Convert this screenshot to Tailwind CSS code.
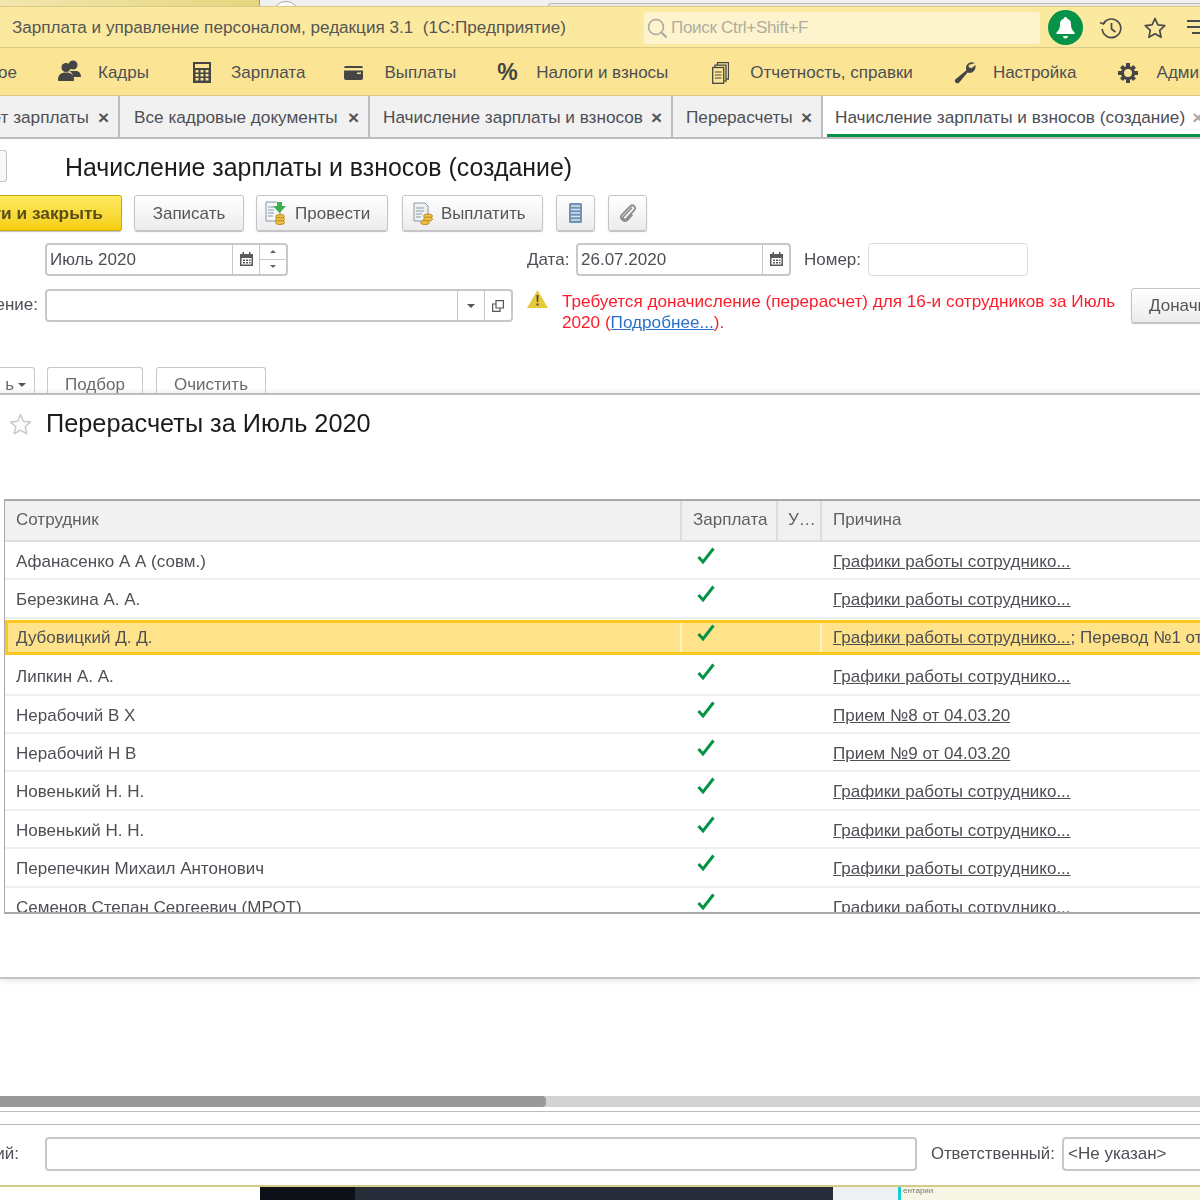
<!DOCTYPE html>
<html lang="ru">
<head>
<meta charset="UTF-8">
<title>Начисление зарплаты и взносов (создание)</title>
<script src="https://cdn.jsdelivr.net/npm/@tailwindcss/browser@4"></script>
</head>
<body class="w-[1200px] h-[1200px] overflow-hidden bg-white font-['Liberation_Sans',Arial,sans-serif] text-[17px] text-[#4d4f55] blur-[0.35px]">

<!-- strip of the window behind -->
<div class="flex h-[6px] overflow-hidden">
  <div class="w-[260px] shrink-0 bg-linear-to-r from-[#f1e6ad] to-[#e6d67f] border-r border-[#999]"></div>
  <div class="flex-1 flex items-start bg-[#f0f0f0]">
    <div class="ml-[12px] mt-[1px] w-[28px] h-[28px] shrink-0 rounded-full border border-[#aaa] bg-white"></div>
    <div class="ml-[248px] mt-[3px] flex-1 h-[10px] rounded-tl-[3px] border-t border-l border-[#bbb] bg-[#e8e8e8]"></div>
  </div>
</div>

<!-- title bar -->
<div class="flex items-center h-[42px] pt-[1px] bg-[#fbe99f] border-y border-[#d9cb85] overflow-hidden">
  <div class="ml-3 w-[632px] shrink-0 whitespace-pre text-[17.100px] text-[#555]">Зарплата и управление персоналом, редакция 3.1  (1С:Предприятие)</div>
  <div class="flex items-center w-[396px] h-[32px] shrink-0 bg-[#fdf4cd] rounded-[3px]">
    <svg class="ml-[1px] w-[24px] h-[24px]" viewBox="0 0 24 24" fill="none" stroke="#a9a9a0" stroke-width="1.6"><circle cx="11" cy="11" r="7.5"/><path d="M16.5 16.5l5 5" stroke-width="2"/></svg>
    <span class="ml-[2px] text-[#b0ada0] tracking-[-0.3px]">Поиск Ctrl+Shift+F</span>
  </div>
  <div class="ml-2 flex items-center justify-center w-[35px] h-[35px] shrink-0 rounded-full bg-[#069347]">
    <svg class="w-[21px] h-[24px]" viewBox="0 0 21 24" fill="#fff"><path d="M10.500 1c1.200 0 1.800.8 1.800 1.800 3 .8 3.700 3.300 3.700 6.200 0 3.400 1.500 5.500 3.500 7.500v1.500H1.500V16.500c2-2 3.500-4.100 3.500-7.500 0-2.900.7-5.400 3.700-6.200C8.700 1.800 9.300 1 10.500 1z"/><path d="M8 20h5c0 1.500-1 2.500-2.500 2.500S8 21.500 8 20z"/></svg>
  </div>
  <svg class="ml-[16px] w-[24px] h-[24px] shrink-0" viewBox="0 0 24 24" fill="none" stroke="#4a4a4a" stroke-width="1.7"><path d="M4.500 7.500A9.300 9.300 0 1 1 3.200 13"/><path d="M1 6.500l3.500 1.500 2.500-3.500" stroke-width="1.500"/><path d="M12.500 7v6l4 3"/></svg>
  <svg class="ml-[20px] w-[24px] h-[24px] shrink-0" viewBox="0 0 24 24" fill="none" stroke="#4a4a4a" stroke-width="1.700" stroke-linejoin="round"><path d="M12 2.500l2.900 6.400 6.900.8-5.100 4.700 1.400 6.900-6.100-3.500-6.100 3.500 1.400-6.900L2.200 9.700l6.900-.8z"/></svg>
  <svg class="ml-[20px] w-[24px] h-[24px] shrink-0" viewBox="0 0 24 24" fill="none" stroke="#4a4a4a" stroke-width="1.800"><path d="M0 5h24M0 11h24M5 17h19"/></svg>
</div>

<!-- main menu -->
<div class="flex items-center h-[48px] pt-[2px] bg-[#fbe594] border-b border-[#d9cb85] whitespace-nowrap overflow-hidden">
  <span class="ml-[-2px] w-[60px] shrink-0">ое</span>
  <svg class="w-[23px] h-[21px] shrink-0 mt-[-4px]" viewBox="0 0 23 21" fill="#454545"><circle cx="15" cy="5" r="4.500"/><path d="M11 11h8c2.500.5 4 2.500 4 6h-8c0-3-1.500-5-4-6z"/><circle cx="8" cy="7.500" r="4.500"/><path d="M0 20c0-5 2.500-7.500 8-7.500s8 2.500 8 7.500c0 .7-.3 1-1 1H1c-.7 0-1-.3-1-1z"/></svg>
  <span class="ml-[17px] mr-[44px] shrink-0">Кадры</span>
  <svg class="w-[18px] h-[21px] shrink-0" viewBox="0 0 18 21" fill="#454545"><path fill-rule="evenodd" d="M0 0h18v21H0zM2 2v4h14V2zM2.500 8v2.500h3V8zM7.500 8v2.500h3V8zM12.500 8v2.500h3V8zM2.500 12v2.500h3V12zM7.500 12v2.500h3V12zM12.500 12v2.500h3V12zM2.500 16v2.500h3V16zM7.500 16v2.500h3V16zM12.500 16v2.500h3V16z"/></svg>
  <span class="ml-[20px] mr-[39px] shrink-0">Зарплата</span>
  <svg class="w-[19px] h-[14px] shrink-0" viewBox="0 0 19 14" fill="#454545"><path d="M0 2a2 2 0 0 1 2-2h15a2 2 0 0 1 2 2H0zM0 4.500h19V12a2 2 0 0 1-2 2H2a2 2 0 0 1-2-2z"/><rect x="13" y="6.500" width="4" height="1.500" fill="#fbe594"/></svg>
  <span class="ml-[21px] mr-[41px] shrink-0">Выплаты</span>
  <span class="w-[20px] text-[23px] font-bold text-[#454545] shrink-0 leading-none">%</span>
  <span class="ml-[19px] mr-[44px] shrink-0">Налоги и взносы</span>
  <svg class="w-[17px] h-[22px] shrink-0" viewBox="0 0 17 22" fill="none" stroke="#454545" stroke-width="1.300"><path d="M5.500 3V.7h11V17h-2"/><path d="M3 5.500V3.200h11V19h-1.500"/><rect x=".7" y="5.500" width="11" height="15.800"/><path d="M3 10h6.500M3 13h6.500M3 16h6.500" stroke-width="1.100"/></svg>
  <span class="ml-[21px] mr-[41px] shrink-0">Отчетность, справки</span>
  <svg class="w-[22px] h-[22px] shrink-0" viewBox="0 0 22 22" fill="#454545"><path d="M21 1c-2.800-1.200-6-.7-7.700 1.500-1.500 1.800-1.600 3.900-.9 5.700L1.500 17.300c-1.300 1.200-.4 3 .7 3.700.9.600 2.300.5 3-.5l8.400-10c2 .8 4.200.4 6-1.300C21.300 7.400 22 4.700 21.300 3l-3.800 3.300-2.600-1.100-.4-2.300z"/></svg>
  <span class="ml-[17px] mr-[41px] shrink-0">Настройка</span>
  <svg class="w-[20px] h-[20px] shrink-0" viewBox="0 0 20 20"><circle cx="10" cy="10" r="5.500" fill="none" stroke="#454545" stroke-width="3"/><path d="M8 0h4v4H8zM8 16h4v4H8zM0 8h4v4H0zM16 8h4v4h-4zM2 4.800L4.800 2l2.500 2.500-2.800 2.800zM12.700 15.500l2.800-2.800 2.500 2.500-2.800 2.800zM15.200 2L18 4.800l-2.500 2.500-2.800-2.800zM4.500 12.700l2.800 2.800L4.800 18 2 15.200z" fill="#454545"/></svg>
  <span class="ml-[19px] shrink-0">Администрирование</span>
</div>

<!-- open tabs -->
<div class="flex h-[43px] bg-[#f1f1f1] border-b-2 border-[#bdbdbd] text-[17.200px] whitespace-nowrap overflow-hidden">
  <div class="flex items-center justify-end w-[120px] shrink-0 pt-[2px] pr-[9px] border-r-2 border-[#bdbdbd] overflow-hidden">
    <span class="shrink-0">ет зарплаты</span><span class="ml-[9px] text-[19px] leading-none font-bold text-[#555] shrink-0">×</span>
  </div>
  <div class="flex items-center justify-between w-[250px] shrink-0 pt-[2px] pl-[14px] pr-[9px] border-r-2 border-[#bdbdbd]">
    <span>Все кадровые документы</span><span class="text-[19px] leading-none font-bold text-[#555]">×</span>
  </div>
  <div class="flex items-center justify-between w-[303px] shrink-0 pt-[2px] pl-[13px] pr-[9px] border-r-2 border-[#bdbdbd]">
    <span>Начисление зарплаты и взносов</span><span class="text-[19px] leading-none font-bold text-[#555]">×</span>
  </div>
  <div class="flex items-center justify-between w-[150px] shrink-0 pt-[2px] pl-[13px] pr-[9px] border-r-2 border-[#bdbdbd]">
    <span>Перерасчеты</span><span class="text-[19px] leading-none font-bold text-[#555]">×</span>
  </div>
  <div class="flex-1 bg-white pl-[4px]">
    <div class="flex items-center h-full pt-[5px] border-b-[3px] border-[#069347] pl-[8px] overflow-hidden">
      <span class="shrink-0">Начисление зарплаты и взносов (создание)</span><span class="ml-[7px] text-[19px] leading-none font-bold text-[#aaa] shrink-0">×</span>
    </div>
  </div>
</div>

<!-- document form -->
<div class="h-[256px] border-b-2 border-[#bdbdbd] shadow-[inset_0_-6px_6px_-6px_rgba(0,0,0,0.12)] overflow-hidden">
  <div class="flex items-center h-[56px] pt-[1px]">
    <div class="w-[7px] h-[32px] mt-[-3px] bg-[#f7f7f7] border border-l-0 border-[#c4c4c4] rounded-r-[3px] shrink-0"></div>
    <div class="ml-[58px] text-[24.900px] text-[#1c1c1c] whitespace-nowrap">Начисление зарплаты и взносов (создание)</div>
  </div>

  <div class="flex h-[36px] whitespace-nowrap">
    <div class="flex items-center justify-end w-[122px] shrink-0 pt-[1px] rounded-r-[3px] bg-linear-to-b from-[#fdea5c] to-[#f5ce00] border border-l-0 border-[#c9a912] shadow-[0_1px_1px_rgba(0,0,0,0.25)] pr-[18px] font-bold text-[17.300px] text-[#5a4d1a] overflow-hidden">
      <span class="shrink-0">ти и закрыть</span>
    </div>
    <button class="ml-[12px] w-[110px] pt-[1px] bg-linear-to-b from-white to-[#ececec] border border-[#c4c4c4] rounded-[3px] shadow-[0_1px_1px_rgba(0,0,0,0.25)] text-[#555]">Записать</button>
    <button class="ml-[12px] w-[132px] flex items-center pl-[8px] gap-[9px] bg-linear-to-b from-white to-[#ececec] border border-[#c4c4c4] rounded-[3px] shadow-[0_1px_1px_rgba(0,0,0,0.25)] text-[#555]">
      <svg class="w-[21px] h-[24px]" viewBox="0 0 21 24"><path d="M1 1h11l3 3v16H1z" fill="#f4f6f8" stroke="#8a97a3"/><path d="M3 6h6M3 9h6M3 12h6M3 15h5" stroke="#8a97a3"/><path d="M12 1h5v4h4l-6.500 7L8 5h4z" fill="#3cb04e"/><ellipse cx="15" cy="15.500" rx="4.500" ry="2" fill="#f2c14a" stroke="#bb8a1c"/><ellipse cx="15" cy="18.500" rx="4.500" ry="2" fill="#f2c14a" stroke="#bb8a1c"/><ellipse cx="15" cy="21.500" rx="4.500" ry="2" fill="#f2c14a" stroke="#bb8a1c"/></svg>
      <span class="pt-[1px]">Провести</span>
    </button>
    <button class="ml-[14px] w-[141px] flex items-center pl-[10px] gap-[7px] bg-linear-to-b from-white to-[#ececec] border border-[#c4c4c4] rounded-[3px] shadow-[0_1px_1px_rgba(0,0,0,0.25)] text-[16.800px] text-[#555]">
      <svg class="w-[21px] h-[24px]" viewBox="0 0 21 24"><path d="M1 2h11l3 3v15H1z" fill="#eef1f4" stroke="#8a97a3"/><path d="M3 7h8M3 10h8M3 13h6M3 16h5" stroke="#8a97a3"/><ellipse cx="15" cy="15" rx="4.500" ry="2" fill="#f2c14a" stroke="#bb8a1c"/><ellipse cx="15" cy="18" rx="4.500" ry="2" fill="#f2c14a" stroke="#bb8a1c"/><ellipse cx="12" cy="21.500" rx="4.500" ry="2" fill="#f2c14a" stroke="#bb8a1c"/></svg>
      <span class="pt-[1px]">Выплатить</span>
    </button>
    <button class="ml-[13px] w-[39px] flex items-center justify-center bg-linear-to-b from-white to-[#ececec] border border-[#c4c4c4] rounded-[3px] shadow-[0_1px_1px_rgba(0,0,0,0.25)]">
      <svg class="w-[13px] h-[20px]" viewBox="0 0 13 20"><rect width="13" height="20" rx="1.500" fill="#6f93b5"/><path d="M2 3h9M2 6.500h9M2 10h9M2 13.500h9M2 17h9" stroke="#d7e4ef" stroke-width="1.500"/></svg>
    </button>
    <button class="ml-[13px] w-[39px] flex items-center justify-center bg-linear-to-b from-white to-[#ececec] border border-[#c4c4c4] rounded-[3px] shadow-[0_1px_1px_rgba(0,0,0,0.25)]">
      <svg class="w-[18px] h-[19px]" viewBox="0 0 18 19" fill="none" stroke="#8d8d8d" stroke-width="1.800"><path d="M13 3.500l-8.500 9c-1.500 1.800 1 4 2.800 2.300l8-8.700c2.500-3-1.500-6.500-4.200-3.800L3 10.500c-3 3.500 1.500 8.500 5.500 5.500l5-5.500"/></svg>
    </button>
  </div>

  <div class="flex items-center h-[34px] mt-[11px]">
    <div class="ml-[45px] flex w-[243px] h-[33px] shrink-0 border-2 border-[#c8c8c8] rounded-[4px]">
      <span class="flex-1 pl-[3px] leading-[29px]">Июль 2020</span>
      <span class="flex items-center justify-center w-[27px] border-l border-[#c8c8c8]">
        <svg class="w-[13px] h-[14px]" viewBox="0 0 13 14" fill="#5a5a5a"><path fill-rule="evenodd" d="M0 2h2.500V0h1.500v2h5V0h1.500v2H13v12H0zM1.500 6v6.500h10V6z"/><path d="M3 7.500h2v1.500H3zM6 7.500h2v1.500H6zM9 7.500h1.500v1.500H9zM3 10h2v1.500H3zM6 10h2v1.500H6zM9 10h1.500v1.500H9z"/></svg>
      </span>
      <span class="flex flex-col w-[27px] border-l border-[#c8c8c8]">
        <span class="flex-1 flex items-center justify-center border-b border-[#c8c8c8]"><span class="w-0 h-0 border-x-[3px] border-x-transparent border-b-[3px] border-b-[#666]"></span></span>
        <span class="flex-1 flex items-center justify-center"><span class="w-0 h-0 border-x-[3px] border-x-transparent border-t-[3px] border-t-[#666]"></span></span>
      </span>
    </div>
    <span class="ml-[239px] w-[49px] shrink-0 pt-[2px]">Дата:</span>
    <div class="flex w-[215px] h-[33px] shrink-0 border-2 border-[#c8c8c8] rounded-[4px]">
      <span class="flex-1 pl-[3px] leading-[29px]">26.07.2020</span>
      <span class="flex items-center justify-center w-[27px] border-l border-[#c8c8c8]">
        <svg class="w-[13px] h-[14px]" viewBox="0 0 13 14" fill="#5a5a5a"><path fill-rule="evenodd" d="M0 2h2.500V0h1.500v2h5V0h1.500v2H13v12H0zM1.500 6v6.500h10V6z"/><path d="M3 7.500h2v1.500H3zM6 7.500h2v1.500H6zM9 7.500h1.500v1.500H9zM3 10h2v1.500H3zM6 10h2v1.500H6zM9 10h1.500v1.500H9z"/></svg>
      </span>
    </div>
    <span class="ml-[13px] w-[64px] shrink-0 pt-[2px]">Номер:</span>
    <div class="w-[160px] h-[33px] shrink-0 border border-[#dcdcdc] rounded-[4px]"></div>
  </div>

  <div class="flex h-[60px] mt-[13px] whitespace-nowrap">
    <span class="flex justify-end w-[38px] shrink-0 leading-[32px] overflow-hidden"><span class="shrink-0">Подразделение:</span></span>
    <div class="ml-[7px] flex w-[468px] h-[33px] shrink-0 border-2 border-[#c8c8c8] rounded-[4px]">
      <span class="flex-1"></span>
      <span class="flex items-center justify-center w-[27px] border-l border-[#c8c8c8]"><span class="w-0 h-0 border-x-[4px] border-x-transparent border-t-[4px] border-t-[#555]"></span></span>
      <span class="flex items-center justify-center w-[27px] border-l border-[#c8c8c8]">
        <svg class="w-[12px] h-[12px]" viewBox="0 0 12 12" fill="none" stroke="#555" stroke-width="1.200"><path d="M4 .6h7.400V8H4z"/><path d="M4 4H.6v7.400H8V8"/></svg>
      </span>
    </div>
    <svg class="ml-[14px] mt-[1px] w-[21px] h-[18px] shrink-0" viewBox="0 0 21 18"><path d="M10.500 0L21 18H0z" fill="#e6c93c"/><path d="M9.500 5h2l-.3 7h-1.400zM9.500 13.500h2v2h-2z" fill="#444"/></svg>
    <div class="ml-[14px] w-[560px] shrink-0 whitespace-normal text-[17.150px] leading-[21px] text-[#fb1c2c] pt-[2px]">Требуется доначисление (перерасчет) для 16-и сотрудников за Июль 2020 (<a class="text-[#2a6fc9] underline">Подробнее...</a>).</div>
    <button class="ml-[9px] w-[120px] h-[35px] shrink-0 -mt-[1px] pl-[17px] text-left bg-linear-to-b from-white to-[#ececec] border border-[#c4c4c4] rounded-[3px] shadow-[0_1px_1px_rgba(0,0,0,0.25)] text-[#555]">Доначислить</button>
  </div>

  <div class="flex h-[27px] mt-[18px] text-[#6a6a6a]">
    <div class="flex items-center justify-end w-[35px] shrink-0 pt-[7px] border border-l-0 border-b-0 border-[#c8c8c8] rounded-tr-[3px] pr-[8px] overflow-hidden">
      <span class="shrink-0">ь</span><span class="ml-[4px] w-0 h-0 shrink-0 border-x-[4px] border-x-transparent border-t-[4px] border-t-[#555]"></span>
    </div>
    <div class="ml-[12px] flex items-center justify-center w-[96px] pt-[7px] border border-b-0 border-[#c8c8c8] rounded-t-[3px]">Подбор</div>
    <div class="ml-[13px] flex items-center justify-center w-[110px] pt-[7px] border border-b-0 border-[#c8c8c8] rounded-t-[3px]">Очистить</div>
  </div>
</div>

<!-- recalculation list -->
<div class="h-[584px] border-b-2 border-[#c4c4c4] shadow-[0_3px_5px_rgba(0,0,0,0.08)] overflow-hidden">
  <div class="flex items-center h-[57px]">
    <svg class="ml-[9px] w-[23px] h-[22px] shrink-0" viewBox="0 0 23 22" fill="#fafafa" stroke="#c9c9c9" stroke-width="1.500" stroke-linejoin="round"><path d="M11.500 1.500l2.900 6.700 7.200.7-5.400 4.800 1.600 7.100-6.300-3.700-6.300 3.700 1.600-7.100L1.400 8.900l7.200-.7z"/></svg>
    <div class="ml-[14px] text-[25.300px] text-[#1c1c1c] whitespace-nowrap">Перерасчеты за Июль 2020</div>
  </div>

  <div class="ml-[4px] mt-[47px] h-[415px] border-t-2 border-l border-b-2 border-[#a9a9a9] overflow-hidden whitespace-nowrap">
    <div class="flex h-[41px] bg-[#f1f1f1] border-b-2 border-[#dedede] leading-[38px] text-[#5f5f5f]">
      <div class="w-[677px] shrink-0 pl-[11px] border-r-2 border-[#dcdcdc]">Сотрудник</div>
      <div class="w-[96px] shrink-0 pl-[11px] border-r-2 border-[#dcdcdc]">Зарплата</div>
      <div class="w-[44px] shrink-0 pl-[10px] border-r-2 border-[#dcdcdc]">У…</div>
      <div class="flex-1 pl-[11px]">Причина</div>
    </div>

    <div class="flex h-[38.400px] border-b-2 border-[#efefef] leading-[39px]">
      <div class="w-[677px] shrink-0 pl-[11px]">Афанасенко А А (совм.)</div>
      <div class="w-[96px] shrink-0 pl-[15px] pt-[5px]"><svg class="w-[18px] h-[18px]" viewBox="0 0 18 18" fill="none" stroke="#069347" stroke-width="3"><path d="M1.500 10l4.500 5L16.500 1.500"/></svg></div>
      <div class="w-[44px] shrink-0"></div>
      <div class="flex-1 pl-[11px]"><a class="underline">Графики работы сотруднико...</a></div>
    </div>
    <div class="flex h-[38.400px] border-b-2 border-[#efefef] leading-[39px]">
      <div class="w-[677px] shrink-0 pl-[11px]">Березкина А. А.</div>
      <div class="w-[96px] shrink-0 pl-[15px] pt-[5px]"><svg class="w-[18px] h-[18px]" viewBox="0 0 18 18" fill="none" stroke="#069347" stroke-width="3"><path d="M1.500 10l4.500 5L16.500 1.500"/></svg></div>
      <div class="w-[44px] shrink-0"></div>
      <div class="flex-1 pl-[11px]"><a class="underline">Графики работы сотруднико...</a></div>
    </div>
    <div class="flex h-[35px] my-[1px] bg-[#ffe38a] border-y-[3px] border-l-[3px] border-[#fcc81f] leading-[29px]">
      <div class="w-[674px] shrink-0 pl-[8px] border-r-2 border-[#fff3c4]">Дубовицкий Д. Д.</div>
      <div class="w-[96px] shrink-0 pl-[15px] pt-[1px]"><svg class="w-[18px] h-[18px]" viewBox="0 0 18 18" fill="none" stroke="#069347" stroke-width="3"><path d="M1.500 10l4.500 5L16.500 1.500"/></svg></div>
      <div class="w-[44px] shrink-0 border-r-2 border-[#fff3c4]"></div>
      <div class="flex-1 pl-[11px]"><a class="underline">Графики работы сотруднико...</a>; Перевод №1 от 01.07.2020</div>
    </div>
    <div class="flex h-[39.800px] border-b-2 border-[#efefef] leading-[41px]">
      <div class="w-[677px] shrink-0 pl-[11px]">Липкин А. А.</div>
      <div class="w-[96px] shrink-0 pl-[15px] pt-[7px]"><svg class="w-[18px] h-[18px]" viewBox="0 0 18 18" fill="none" stroke="#069347" stroke-width="3"><path d="M1.500 10l4.500 5L16.500 1.500"/></svg></div>
      <div class="w-[44px] shrink-0"></div>
      <div class="flex-1 pl-[11px]"><a class="underline">Графики работы сотруднико...</a></div>
    </div>
    <div class="flex h-[38.400px] border-b-2 border-[#efefef] leading-[39px]">
      <div class="w-[677px] shrink-0 pl-[11px]">Нерабочий В Х</div>
      <div class="w-[96px] shrink-0 pl-[15px] pt-[5px]"><svg class="w-[18px] h-[18px]" viewBox="0 0 18 18" fill="none" stroke="#069347" stroke-width="3"><path d="M1.500 10l4.500 5L16.500 1.500"/></svg></div>
      <div class="w-[44px] shrink-0"></div>
      <div class="flex-1 pl-[11px]"><a class="underline">Прием №8 от 04.03.20</a></div>
    </div>
    <div class="flex h-[38.400px] border-b-2 border-[#efefef] leading-[39px]">
      <div class="w-[677px] shrink-0 pl-[11px]">Нерабочий Н В</div>
      <div class="w-[96px] shrink-0 pl-[15px] pt-[5px]"><svg class="w-[18px] h-[18px]" viewBox="0 0 18 18" fill="none" stroke="#069347" stroke-width="3"><path d="M1.500 10l4.500 5L16.500 1.500"/></svg></div>
      <div class="w-[44px] shrink-0"></div>
      <div class="flex-1 pl-[11px]"><a class="underline">Прием №9 от 04.03.20</a></div>
    </div>
    <div class="flex h-[38.400px] border-b-2 border-[#efefef] leading-[39px]">
      <div class="w-[677px] shrink-0 pl-[11px]">Новенький Н. Н.</div>
      <div class="w-[96px] shrink-0 pl-[15px] pt-[5px]"><svg class="w-[18px] h-[18px]" viewBox="0 0 18 18" fill="none" stroke="#069347" stroke-width="3"><path d="M1.500 10l4.500 5L16.500 1.500"/></svg></div>
      <div class="w-[44px] shrink-0"></div>
      <div class="flex-1 pl-[11px]"><a class="underline">Графики работы сотруднико...</a></div>
    </div>
    <div class="flex h-[38.400px] border-b-2 border-[#efefef] leading-[39px]">
      <div class="w-[677px] shrink-0 pl-[11px]">Новенький Н. Н.</div>
      <div class="w-[96px] shrink-0 pl-[15px] pt-[5px]"><svg class="w-[18px] h-[18px]" viewBox="0 0 18 18" fill="none" stroke="#069347" stroke-width="3"><path d="M1.500 10l4.500 5L16.500 1.500"/></svg></div>
      <div class="w-[44px] shrink-0"></div>
      <div class="flex-1 pl-[11px]"><a class="underline">Графики работы сотруднико...</a></div>
    </div>
    <div class="flex h-[38.400px] border-b-2 border-[#efefef] leading-[39px]">
      <div class="w-[677px] shrink-0 pl-[11px]">Перепечкин Михаил Антонович</div>
      <div class="w-[96px] shrink-0 pl-[15px] pt-[5px]"><svg class="w-[18px] h-[18px]" viewBox="0 0 18 18" fill="none" stroke="#069347" stroke-width="3"><path d="M1.500 10l4.500 5L16.500 1.500"/></svg></div>
      <div class="w-[44px] shrink-0"></div>
      <div class="flex-1 pl-[11px]"><a class="underline">Графики работы сотруднико...</a></div>
    </div>
    <div class="flex h-[38.400px] border-b-2 border-[#efefef] leading-[39px]">
      <div class="w-[677px] shrink-0 pl-[11px]">Семенов Степан Сергеевич (МРОТ)</div>
      <div class="w-[96px] shrink-0 pl-[15px] pt-[5px]"><svg class="w-[18px] h-[18px]" viewBox="0 0 18 18" fill="none" stroke="#069347" stroke-width="3"><path d="M1.500 10l4.500 5L16.500 1.500"/></svg></div>
      <div class="w-[44px] shrink-0"></div>
      <div class="flex-1 pl-[11px]"><a class="underline">Графики работы сотруднико...</a></div>
    </div>
  </div>
</div>

<!-- scrollbar -->
<div class="mt-[117px] h-[11px] bg-[#d3d3d3]">
  <div class="w-[546px] h-full bg-[#999] rounded-r-[4px]"></div>
</div>

<!-- footer -->
<div class="mt-[4px] h-[14px] border-y border-[#bcbcbc]"></div>
<div class="flex items-start h-[62px] pt-[12px] border-b-2 border-[#d6cc88] whitespace-nowrap">
  <span class="flex justify-end w-[19px] shrink-0 overflow-hidden leading-[34px]"><span class="shrink-0">Комментарий:</span></span>
  <div class="ml-[26px] w-[872px] h-[34px] shrink-0 border-2 border-[#c8c8c8] rounded-[4px]"></div>
  <span class="ml-[14px] w-[131px] shrink-0 text-[16.700px] leading-[34px]">Ответственный:</span>
  <div class="flex-1 h-[34px] pl-[4px] leading-[30px] border-2 border-r-0 border-[#c8c8c8] rounded-l-[4px]">&lt;Не указан&gt;</div>
</div>

<!-- what shows below the window -->
<div class="flex h-[13px]">
  <div class="w-[260px] bg-white"></div>
  <div class="w-[95px] bg-[#0d1117]"></div>
  <div class="w-[478px] bg-[#262d38]"></div>
  <div class="w-[65px] bg-[#eef1f4]"></div>
  <div class="w-[3px] bg-[#16cfd6]"></div>
  <div class="flex-1 bg-[#f7f6e4] pl-[2px] text-[8px] leading-[8px] text-[#777] overflow-hidden">ентарии</div>
</div>
</body>
</html>
